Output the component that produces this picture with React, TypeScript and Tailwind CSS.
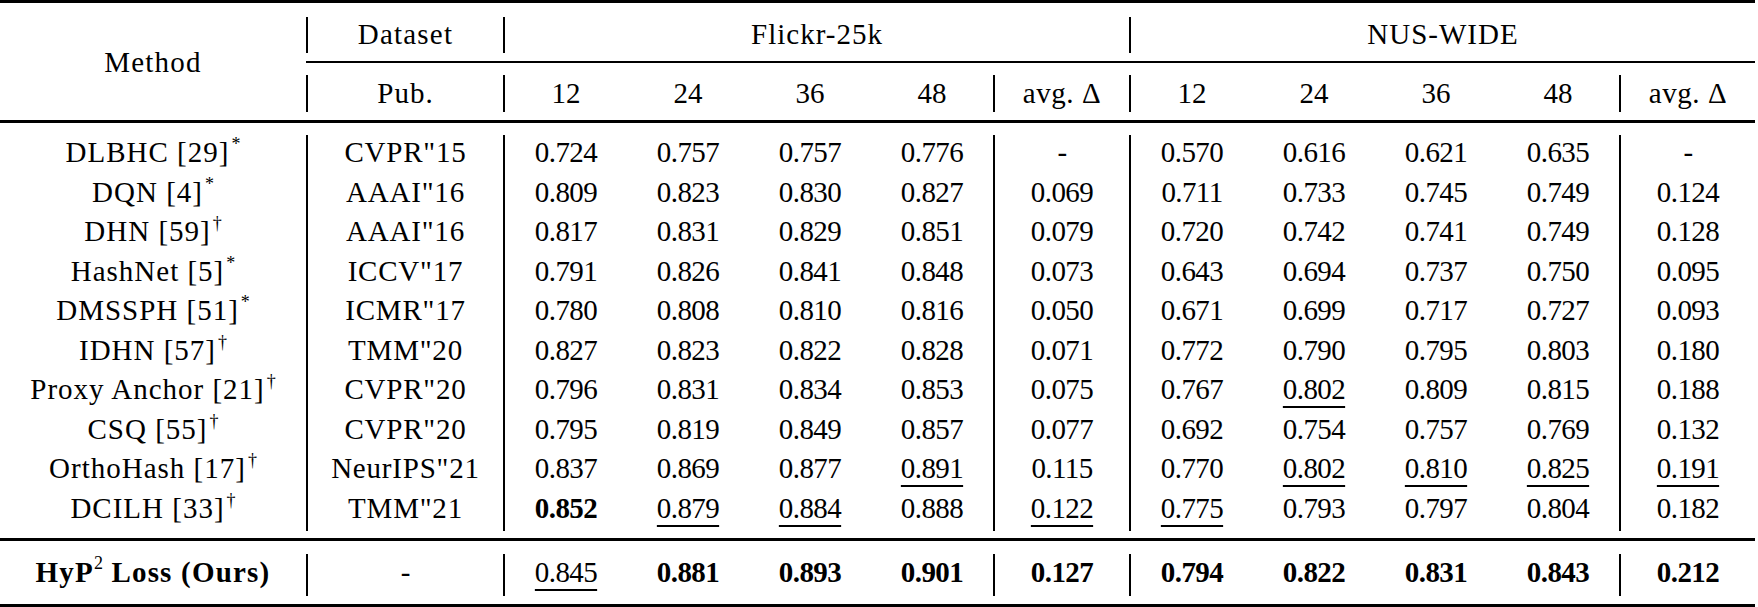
import React from "react";

type Row = { name: string; mark: string; pub: string; f: string[]; n: string[] };

const rows: Row[] = [
  { name: "DLBHC [29]", mark: "*", pub: 'CVPR"15', f: ["0.724", "0.757", "0.757", "0.776", "-"], n: ["0.570", "0.616", "0.621", "0.635", "-"] },
  { name: "DQN [4]", mark: "*", pub: 'AAAI"16', f: ["0.809", "0.823", "0.830", "0.827", "0.069"], n: ["0.711", "0.733", "0.745", "0.749", "0.124"] },
  { name: "DHN [59]", mark: "†", pub: 'AAAI"16', f: ["0.817", "0.831", "0.829", "0.851", "0.079"], n: ["0.720", "0.742", "0.741", "0.749", "0.128"] },
  { name: "HashNet [5]", mark: "*", pub: 'ICCV"17', f: ["0.791", "0.826", "0.841", "0.848", "0.073"], n: ["0.643", "0.694", "0.737", "0.750", "0.095"] },
  { name: "DMSSPH [51]", mark: "*", pub: 'ICMR"17', f: ["0.780", "0.808", "0.810", "0.816", "0.050"], n: ["0.671", "0.699", "0.717", "0.727", "0.093"] },
  { name: "IDHN [57]", mark: "†", pub: 'TMM"20', f: ["0.827", "0.823", "0.822", "0.828", "0.071"], n: ["0.772", "0.790", "0.795", "0.803", "0.180"] },
  { name: "Proxy Anchor [21]", mark: "†", pub: 'CVPR"20', f: ["0.796", "0.831", "0.834", "0.853", "0.075"], n: ["0.767", "_0.802", "0.809", "0.815", "0.188"] },
  { name: "CSQ [55]", mark: "†", pub: 'CVPR"20', f: ["0.795", "0.819", "0.849", "0.857", "0.077"], n: ["0.692", "0.754", "0.757", "0.769", "0.132"] },
  { name: "OrthoHash [17]", mark: "†", pub: 'NeurIPS"21', f: ["0.837", "0.869", "0.877", "_0.891", "0.115"], n: ["0.770", "_0.802", "_0.810", "_0.825", "_0.191"] },
  { name: "DCILH [33]", mark: "†", pub: 'TMM"21', f: ["*0.852", "_0.879", "_0.884", "0.888", "_0.122"], n: ["_0.775", "0.793", "0.797", "0.804", "0.182"] },
];

const ours = {
  f: ["_0.845", "*0.881", "*0.893", "*0.901", "*0.127"],
  n: ["*0.794", "*0.822", "*0.831", "*0.843", "*0.212"],
};

function Num({ v }: { v: string }) {
  if (v.startsWith("_")) {
    return (
      <span className="tracking-[-0.6px] underline decoration-[1.5px] underline-offset-[7px]">{v.slice(1)}</span>
    );
  }
  if (v.startsWith("*")) {
    return <span className="font-bold tracking-[-0.6px]">{v.slice(1)}</span>;
  }
  return <span className="tracking-[-0.6px]">{v}</span>;
}

function NumCell({ v }: { v: string }) {
  return (
    <div className="flex items-center justify-center leading-[39px]">
      <Num v={v} />
    </div>
  );
}

export default function App() {
  return (
    <div className="w-[1758px] h-[607px] bg-white text-black [font-family:'Liberation_Serif','Times_New_Roman',serif] text-[29px]">
      <div className="w-[1755px]">
        {/* top rule */}
        <div className="h-[3px] bg-black" />

        {/* header */}
        <div className="grid grid-cols-[306px_2px_195px_2px_122px_122px_122px_122px_2px_134px_2px_122px_122px_122px_122px_2px_134px] grid-rows-[58px_2px_57px]">
          <div className="col-start-1 row-start-1 row-span-3 flex items-center justify-center pt-[3px] tracking-[1.2px]">
            Method
          </div>
          <div className="col-start-2 row-start-1 bg-black mt-[14px] mb-[8px]" />
          <div className="col-start-3 row-start-1 flex items-center justify-center pt-[14px] pb-[8px] tracking-[1.2px]">
            Dataset
          </div>
          <div className="col-start-4 row-start-1 bg-black mt-[14px] mb-[8px]" />
          <div className="col-start-5 col-span-6 row-start-1 flex items-center justify-center pt-[14px] pb-[8px] tracking-[1px]">
            Flickr-25k
          </div>
          <div className="col-start-11 row-start-1 bg-black mt-[14px] mb-[8px]" />
          <div className="col-start-12 col-span-6 row-start-1 flex items-center justify-center pt-[14px] pb-[8px] tracking-[1px]">
            NUS-WIDE
          </div>

          <div className="col-start-2 col-span-16 row-start-2 bg-black" />

          <div className="col-start-2 row-start-3 bg-black mt-[12px] mb-[8px]" />
          <div className="col-start-3 row-start-3 flex items-center justify-center pt-[12px] pb-[8px] tracking-[1px]">Pub.</div>
          <div className="col-start-4 row-start-3 bg-black mt-[12px] mb-[8px]" />
          <div className="col-start-5 row-start-3 flex items-center justify-center pt-[12px] pb-[8px]">12</div>
          <div className="col-start-6 row-start-3 flex items-center justify-center pt-[12px] pb-[8px]">24</div>
          <div className="col-start-7 row-start-3 flex items-center justify-center pt-[12px] pb-[8px]">36</div>
          <div className="col-start-8 row-start-3 flex items-center justify-center pt-[12px] pb-[8px]">48</div>
          <div className="col-start-9 row-start-3 bg-black mt-[12px] mb-[8px]" />
          <div className="col-start-10 row-start-3 flex items-center justify-center pt-[12px] pb-[8px] tracking-[0.6px]">avg. Δ</div>
          <div className="col-start-11 row-start-3 bg-black mt-[12px] mb-[8px]" />
          <div className="col-start-12 row-start-3 flex items-center justify-center pt-[12px] pb-[8px]">12</div>
          <div className="col-start-13 row-start-3 flex items-center justify-center pt-[12px] pb-[8px]">24</div>
          <div className="col-start-14 row-start-3 flex items-center justify-center pt-[12px] pb-[8px]">36</div>
          <div className="col-start-15 row-start-3 flex items-center justify-center pt-[12px] pb-[8px]">48</div>
          <div className="col-start-16 row-start-3 bg-black mt-[12px] mb-[8px]" />
          <div className="col-start-17 row-start-3 flex items-center justify-center pt-[12px] pb-[8px] tracking-[0.6px]">avg. Δ</div>
        </div>

        {/* mid rule */}
        <div className="h-[3px] bg-black" />

        {/* data block */}
        <div className="grid grid-cols-[306px_2px_195px_2px_122px_122px_122px_122px_2px_134px_2px_122px_122px_122px_122px_2px_134px] auto-rows-[39.5px] pt-[10px] pb-[10px]">
          <div className="col-start-2 row-start-1 row-span-10 bg-black mt-[2px] -mb-[3px]" />
          <div className="col-start-4 row-start-1 row-span-10 bg-black mt-[2px] -mb-[3px]" />
          <div className="col-start-9 row-start-1 row-span-10 bg-black mt-[2px] -mb-[3px]" />
          <div className="col-start-11 row-start-1 row-span-10 bg-black mt-[2px] -mb-[3px]" />
          <div className="col-start-16 row-start-1 row-span-10 bg-black mt-[2px] -mb-[3px]" />
          {rows.map((r) => (
            <React.Fragment key={r.name}>
              <div className="flex items-center justify-center leading-[39px] tracking-[1px]">
                <span>
                  {r.name}
                  <span className="ml-[2px] text-[18px] leading-none align-[12px] tracking-normal">{r.mark}</span>
                </span>
              </div>
              <div className="flex items-center justify-center leading-[39px] tracking-[0.8px]">{r.pub}</div>
              {r.f.map((v, i) => (
                <NumCell key={"f" + i} v={v} />
              ))}
              {r.n.map((v, i) => (
                <NumCell key={"n" + i} v={v} />
              ))}
            </React.Fragment>
          ))}
        </div>

        {/* mid rule */}
        <div className="h-[3px] bg-black" />

        {/* ours row */}
        <div className="grid grid-cols-[306px_2px_195px_2px_122px_122px_122px_122px_2px_134px_2px_122px_122px_122px_122px_2px_134px] h-[63px]">
          <div className="col-start-1 row-start-1 flex items-center justify-center pt-[9px] pb-[9px] font-bold tracking-[1.2px]">
            <span>
              HyP<span className="text-[18px] font-normal leading-none align-[13px] tracking-normal">2</span> Loss (Ours)
            </span>
          </div>
          <div className="col-start-2 row-start-1 bg-black mt-[13px] mb-[8px]" />
          <div className="col-start-3 row-start-1 flex items-center justify-center pt-[9px] pb-[9px]">-</div>
          <div className="col-start-4 row-start-1 bg-black mt-[13px] mb-[8px]" />
          {ours.f.slice(0, 4).map((v, i) => (
            <div key={"of" + i} className="row-start-1 flex items-center justify-center pt-[9px] pb-[9px]">
              <Num v={v} />
            </div>
          ))}
          <div className="col-start-9 row-start-1 bg-black mt-[13px] mb-[8px]" />
          <div className="col-start-10 row-start-1 flex items-center justify-center pt-[9px] pb-[9px]">
            <Num v={ours.f[4]} />
          </div>
          <div className="col-start-11 row-start-1 bg-black mt-[13px] mb-[8px]" />
          {ours.n.slice(0, 4).map((v, i) => (
            <div key={"on" + i} className="row-start-1 flex items-center justify-center pt-[9px] pb-[9px]">
              <Num v={v} />
            </div>
          ))}
          <div className="col-start-16 row-start-1 bg-black mt-[13px] mb-[8px]" />
          <div className="col-start-17 row-start-1 flex items-center justify-center pt-[9px] pb-[9px]">
            <Num v={ours.n[4]} />
          </div>
        </div>

        {/* bottom rule */}
        <div className="h-[3px] bg-black" />
      </div>
    </div>
  );
}
